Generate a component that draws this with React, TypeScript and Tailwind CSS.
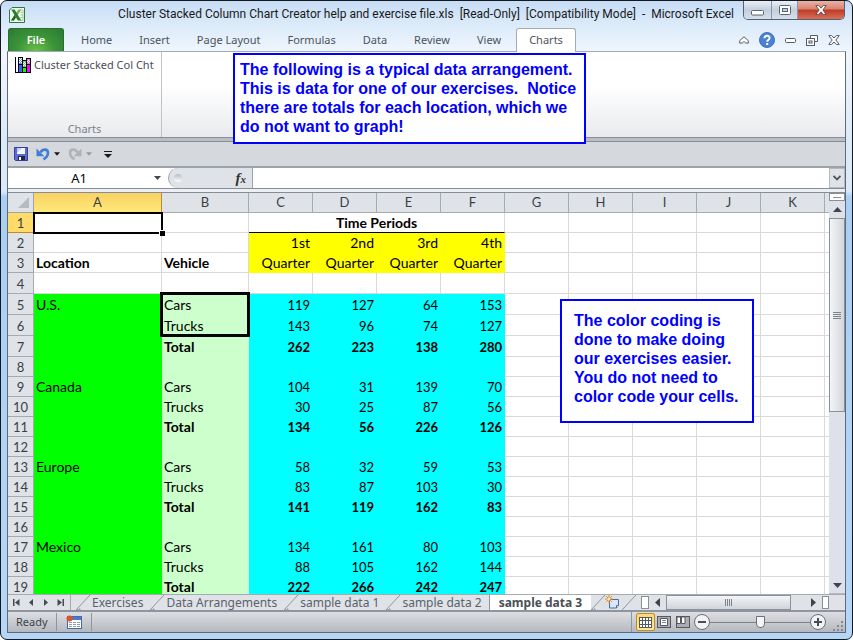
import type { ReactNode } from 'react';
import clsx from 'clsx';

type Cell = string | number;

const rows: { h: string; cells: Cell[]; bold?: boolean; kind: 'title' | 'quarter' | 'plain' | 'data' }[] = [
  { h: 'h-[20px]', kind: 'title', cells: ['', '', 'Time Periods'], bold: true },
  { h: 'h-[20px]', kind: 'quarter', cells: ['', '', '1st', '2nd', '3rd', '4th'] },
  { h: 'h-[20px]', kind: 'quarter', cells: ['Location', 'Vehicle', 'Quarter', 'Quarter', 'Quarter', 'Quarter'] },
  { h: 'h-[21px]', kind: 'plain', cells: ['', '', '', '', '', ''] },
  { h: 'h-[21px]', kind: 'data', cells: ['U.S.', 'Cars', 119, 127, 64, 153] },
  { h: 'h-[21px]', kind: 'data', cells: ['', 'Trucks', 143, 96, 74, 127] },
  { h: 'h-[21px]', kind: 'data', cells: ['', 'Total', 262, 223, 138, 280], bold: true },
  { h: 'h-[20px]', kind: 'data', cells: ['', '', '', '', '', ''] },
  { h: 'h-[20px]', kind: 'data', cells: ['Canada', 'Cars', 104, 31, 139, 70] },
  { h: 'h-[20px]', kind: 'data', cells: ['', 'Trucks', 30, 25, 87, 56] },
  { h: 'h-[20px]', kind: 'data', cells: ['', 'Total', 134, 56, 226, 126], bold: true },
  { h: 'h-[20px]', kind: 'data', cells: ['', '', '', '', '', ''] },
  { h: 'h-[20px]', kind: 'data', cells: ['Europe', 'Cars', 58, 32, 59, 53] },
  { h: 'h-[20px]', kind: 'data', cells: ['', 'Trucks', 83, 87, 103, 30] },
  { h: 'h-[20px]', kind: 'data', cells: ['', 'Total', 141, 119, 162, 83], bold: true },
  { h: 'h-[20px]', kind: 'data', cells: ['', '', '', '', '', ''] },
  { h: 'h-[20px]', kind: 'data', cells: ['Mexico', 'Cars', 134, 161, 80, 103] },
  { h: 'h-[20px]', kind: 'data', cells: ['', 'Trucks', 88, 105, 162, 144] },
  { h: 'h-[20px]', kind: 'data', cells: ['', 'Total', 222, 266, 242, 247], bold: true },
];

const columns = ['A', 'B', 'C', 'D', 'E', 'F', 'G', 'H', 'I', 'J', 'K'];
const emptyColumns = ['G', 'H', 'I', 'J', 'K', 'rest'];
const ribbonTabs = ['Home', 'Insert', 'Page Layout', 'Formulas', 'Data', 'Review', 'View'];
const sheetTabs = ['Exercises', 'Data Arrangements', 'sample data 1', 'sample data 2'];

function cellStyle(kind: string, col: number) {
  if (kind === 'data') {
    if (col === 0) return 'bg-[#00ff00] border-transparent';
    if (col === 1) return 'bg-[#ccffcc] border-transparent';
    return 'bg-[#00ffff] border-transparent';
  }
  if (kind === 'quarter' && col > 1) return 'bg-[#ffff00] border-transparent';
  return 'border-[#d9d9d9]';
}

function Caret({ className }: { className?: string }) {
  return (
    <svg className={className} width="7" height="4" viewBox="0 0 7 4" aria-hidden="true">
      <path d="M0 0h7L3.5 4z" fill="currentColor" />
    </svg>
  );
}

function ExcelLogo() {
  return (
    <svg width="16" height="16" viewBox="0 0 16 16" aria-hidden="true">
      <path d="M3 .5h12.500v15H.5V3z" fill="#f4faf1" stroke="#2d7a3c" />
      <path d="M11.500 3h2.500v10.500h-2.500M11.500 5.500H14M11.500 8H14M11.500 10.500H14" fill="none" stroke="#a5cf9b" />
      <path d="M9.500 2.500h2.800L5 13.500H2z" fill="#6db34a" />
      <path d="M2.200 2.500h3.400l6.700 11H8.800z" fill="#2a7d31" />
      <path d="M2 13.500 5.500 8l1.400 2.600L5 13.500z" fill="#1d6a2b" />
    </svg>
  );
}

function ChartIcon() {
  return (
    <svg width="16" height="17" viewBox="0 0 16 17" className="shrink-0" shapeRendering="crispEdges" aria-hidden="true">
      <path d="M0 0h1v15h15v1H0z" fill="#000" />
      <path d="M3 0h5v16H3zM7 3h5v13H7zM11 1h5v15h-5z" fill="#000" />
      <path d="M4 1h3v6H4z" fill="#6c9cf8" />
      <path d="M4 8h3v7H4z" fill="#3366ff" />
      <path d="M8 4h3v6H8z" fill="#5fd86f" />
      <path d="M8 11h3v4H8z" fill="#00ff00" />
      <path d="M12 2h3v5h-3z" fill="#ff6ae8" />
      <path d="M12 8h3v7h-3z" fill="#ff00ff" />
      <path d="M4 1h1v1H4zM6 1h1v1H6zM5 2h1v1H5zM4 3h1v1H4zM6 3h1v1H6zM5 4h1v1H5zM4 5h1v1H4zM6 5h1v1H6zM9 5h1v1H9zM8 6h1v1H8zM10 6h1v1h-1zM9 7h1v1H9zM8 8h1v1H8zM10 8h1v1h-1zM13 3h1v1h-1zM12 4h1v1h-1zM14 4h1v1h-1zM13 5h1v1h-1z" fill="#fff" />
    </svg>
  );
}

function SaveIcon() {
  return (
    <svg width="14" height="14" viewBox="0 0 14 14" aria-hidden="true">
      <path d="M.5.5h13v13h-12l-1-1z" fill="#5b6bd0" stroke="#3440a0" />
      <path d="M3 1h8v6H3z" fill="#f4f7fd" />
      <path d="M3 1h5l-5 5z" fill="#c3d2f4" />
      <path d="M4 9h7v4H4z" fill="#20264f" />
      <path d="M5 10h2v3H5z" fill="#fff" />
    </svg>
  );
}

function UndoIcon({ flip }: { flip?: boolean }) {
  return (
    <svg width="14" height="14" viewBox="0 0 14 14" className={clsx(flip && '-scale-x-100')} aria-hidden="true">
      <path d="M4.500 5.500C6.500 1.500 12 1.600 12 6c0 2.600-1.800 4.600-4.500 6.400" fill="none" stroke={flip ? '#b0b3b8' : '#3f7fd6'} strokeWidth="2.600" />
      <path d="M.5 1.500v7.800h7.800z" fill={flip ? '#b0b3b8' : '#3f7fd6'} />
    </svg>
  );
}

/* Title bar with the min / max / close group hanging from the top edge */
function TitleBar() {
  return (
    <header className="flex h-[27px] shrink-0 items-start pl-[8px] pr-[7px]">
      <div className="mt-[6px]">
        <ExcelLogo />
      </div>
      <h1 className="mt-[4px] min-w-0 flex-1 overflow-hidden whitespace-pre pr-[9px] text-right font-['Roboto',sans-serif] text-[12px] leading-[18px] text-[#1a1a1a]">
        Cluster Stacked Column Chart Creator help and exercise file.xls  [Read-Only]  [Compatibility Mode]  -  Microsoft Excel
      </h1>
      <div className="flex h-[19px] shrink-0 overflow-hidden rounded-b-[5px] border border-t-0 border-[#56616e]">
        <button aria-label="Minimize" className="flex w-[28px] items-center justify-center border-r border-[#8b97a5] bg-linear-to-b from-[#e9f0f8] via-[#c3cfdc] to-[#d5e0ec]">
          <svg width="13" height="6" viewBox="0 0 13 6" className="mt-[6px]">
            <rect x=".5" y=".5" width="12" height="4.500" rx="1" fill="#fff" stroke="#5b6470" />
          </svg>
        </button>
        <button aria-label="Maximize" className="flex w-[26px] items-center justify-center border-r border-[#8b97a5] bg-linear-to-b from-[#e9f0f8] via-[#c3cfdc] to-[#d5e0ec]">
          <svg width="12" height="10" viewBox="0 0 12 10">
            <rect x=".5" y=".5" width="11" height="9" rx="1" fill="#fff" stroke="#5b6470" />
            <rect x="3.500" y="3.500" width="5" height="3" fill="#c3cfdc" stroke="#5b6470" />
          </svg>
        </button>
        <button aria-label="Close" className="flex w-[46px] items-center justify-center bg-[linear-gradient(#e8b3a6,#d98371_45%,#bf3a24_50%,#d8705a)]">
          <svg width="12" height="10" viewBox="0 0 12 10">
            <path d="M.8.6h3L6 3.200 8.200.6h3L7.800 5l3.400 4.400h-3L6 6.800 3.800 9.400h-3L4.200 5z" fill="#fff" stroke="#5c4648" strokeWidth=".9" />
          </svg>
        </button>
      </div>
    </header>
  );
}

function RibbonTabs() {
  return (
    <nav className="relative z-10 -mb-px flex h-[24px] shrink-0 items-stretch pl-[7px] pr-[12px] text-[11px] text-[#4c535c]">
      <button className="mb-px w-[56px] rounded-t-[3px] border border-b-0 border-[#2d6b2f] bg-[radial-gradient(ellipse_at_bottom,#6cc04a,#3b9438_50%,#2a7a33)] font-semibold text-white">
        File
      </button>
      <div className="flex gap-[27px] pl-[17px] pr-[15px]">
        {ribbonTabs.map((tab) => (
          <button key={tab}>{tab}</button>
        ))}
      </div>
      <button className="w-[60px] rounded-t-[3px] border border-b-0 border-[#a3abb5] bg-white">Charts</button>
      <div className="ml-auto flex items-center gap-[10px] text-[#555c66]">
        <button aria-label="Minimize the Ribbon">
          <svg width="10" height="8" viewBox="0 0 10 8">
            <path d="M.7 4.700 5 .8l4.300 3.900v2.400H6.800L5 5.400 3.200 7.100H.7z" fill="#fff" stroke="currentColor" />
          </svg>
        </button>
        <button aria-label="Help">
          <svg width="16" height="16" viewBox="0 0 16 16">
            <circle cx="8" cy="8" r="7.500" fill="#4a82d2" stroke="#3f6fbc" />
            <path d="M5.500 6.200C5.500 3 10.600 3 10.600 6c0 1.700-2.400 1.900-2.400 3.800" fill="none" stroke="#fff" strokeWidth="1.900" />
            <rect x="7.200" y="11" width="2" height="2" fill="#fff" />
          </svg>
        </button>
        <button aria-label="Minimize Window">
          <svg width="11" height="5" viewBox="0 0 11 5">
            <rect x=".5" y=".5" width="10" height="4" rx="1" fill="#fff" stroke="currentColor" />
          </svg>
        </button>
        <button aria-label="Restore Window">
          <svg width="12" height="11" viewBox="0 0 12 11">
            <path d="M4.500 3.500v-3h7v6h-3" fill="#fff" stroke="currentColor" />
            <rect x=".5" y="3.500" width="8" height="7" fill="#fff" stroke="currentColor" />
            <rect x="3" y="6" width="3" height="2" fill="none" stroke="currentColor" />
          </svg>
        </button>
        <button aria-label="Close Window">
          <svg width="12" height="10" viewBox="0 0 12 10">
            <path d="M.8.6h2.900L6 3 8.300.6h2.900L7.800 5l3.400 4.400H8.300L6 7 3.700 9.400H.8L4.200 5z" fill="#fff" stroke="currentColor" />
          </svg>
        </button>
      </div>
    </nav>
  );
}

function Ribbon() {
  return (
    <section className="flex h-[85px] shrink-0 bg-linear-to-b from-white from-40% to-[#e8eaed] text-[11px]">
      <div className="flex w-[154px] flex-col border-r border-[#bfc3c8]">
        <button className="flex items-center gap-[3px] whitespace-nowrap pl-[7px] pt-[4px] leading-[18px] text-[#4a4f58]">
          <ChartIcon />
          Cluster Stacked Col Cht
        </button>
        <span className="mt-auto text-center leading-[16px] text-[#7b828c]">Charts</span>
      </div>
    </section>
  );
}

function QuickAccess() {
  return (
    <div className="flex h-[26px] shrink-0 items-center border-b-2 border-[#9ba2aa] bg-[#d5d8dd] pl-[6px] text-[#1b1b1b]">
      <button aria-label="Save">
        <SaveIcon />
      </button>
      <button aria-label="Undo" className="ml-[8px] flex items-center gap-[4px]">
        <UndoIcon />
        <Caret className="w-[6px]" />
      </button>
      <button aria-label="Redo" className="ml-[8px] flex items-center gap-[4px] text-[#96999d]">
        <UndoIcon flip />
        <Caret className="w-[6px]" />
      </button>
      <button aria-label="Customize Quick Access Toolbar" className="ml-[12px]">
        <svg width="8" height="7" viewBox="0 0 8 7">
          <path d="M0 0h8v1H0zM0 3h8L4 7z" fill="currentColor" />
        </svg>
      </button>
    </div>
  );
}

function FormulaBar() {
  return (
    <div className="flex h-[20px] shrink-0 bg-white">
      <div className="flex w-[160px] items-center">
        <input aria-label="Name Box" defaultValue="A1" className="w-[142px] bg-transparent text-center text-[13px] leading-[18px] outline-none" />
        <Caret className="ml-[4px] text-[#44494f]" />
      </div>
      <div className="flex w-[84px] items-center justify-between rounded-l-full border-l border-[#9ba2aa] bg-[#dfe3e8] pl-[5px] pr-[6px]">
        <span className="h-[8px] w-[8px] rounded-full bg-linear-to-b from-[#b7bcc2] to-white" />
        <button aria-label="Insert Function" className="font-['Liberation_Serif',serif] text-[15px] font-bold italic leading-[16px] text-[#333]">
          f<span className="text-[11px]">x</span>
        </button>
      </div>
      <input aria-label="Formula Bar" className="min-w-0 flex-1 border-l border-[#9ba2aa] px-1 outline-none" />
      <button aria-label="Expand Formula Bar" className="flex w-[16px] items-center justify-center border border-[#b4b9c0] bg-[#dfe3e8] text-[#50565e]">
        <svg width="8" height="6" viewBox="0 0 8 6">
          <path d="M.5 1 4 4.500 7.500 1" fill="none" stroke="currentColor" strokeWidth="1.800" />
        </svg>
      </button>
    </div>
  );
}

function Note({ className, children }: { className: string; children: ReactNode }) {
  return (
    <div className={clsx("absolute z-20 whitespace-pre border-2 border-[#0000ff] bg-white font-['Liberation_Sans',sans-serif] text-[16px] font-bold leading-[19px] text-[#0000ff]", className)}>
      {children}
    </div>
  );
}

function Sheet() {
  return (
    <div className="relative min-w-0 flex-1 overflow-hidden bg-white">
      <table className="w-full table-fixed border-separate border-spacing-0 font-['Lato',sans-serif] text-black">
        <colgroup>
          <col className="w-[26px]" />
          <col className="w-[128px]" />
          <col className="w-[87px]" />
          {columns.slice(2).map((c) => (
            <col key={c} className="w-[64px]" />
          ))}
          <col />
        </colgroup>
        <thead>
          <tr className="h-[20px] text-[13px] leading-[17px] text-[#3b3f45]">
            <th className="border-b border-r border-[#9ea4ab] bg-[#dfe3e8] p-0">
              <svg width="11" height="11" viewBox="0 0 11 11" className="ml-auto mr-[4px]" aria-hidden="true">
                <path d="M11 0v11H0z" fill="#b6bbc1" />
              </svg>
            </th>
            {columns.map((c) => (
              <th
                key={c}
                scope="col"
                className={clsx(
                  'border-b border-r p-0 font-normal',
                  c === 'A' ? 'border-[#c28a30] bg-linear-to-b from-[#f9d262] to-[#ffe87a]' : 'border-[#a6abb2] bg-[#dfe3e8]'
                )}
              >
                {c}
              </th>
            ))}
            <th className="border-b border-[#a6abb2] bg-[#dfe3e8] p-0" />
          </tr>
        </thead>
        <tbody>
          {rows.map((row, r) => (
            <tr key={r} className={row.h}>
              <th
                scope="row"
                className={clsx(
                  'border-b border-r p-0 text-center align-bottom text-[13px] font-normal leading-[17px] text-[#3b3f45]',
                  r === 0 ? 'border-[#c28a30] bg-[#ffdc69]' : 'border-[#a6abb2] bg-[#dfe3e8]'
                )}
              >
                {r + 1}
              </th>
              {row.cells.map((value, c) => (
                <td
                  key={c}
                  colSpan={row.kind === 'title' && c === 2 ? 4 : 1}
                  className={clsx(
                    'relative whitespace-nowrap border-b border-r px-[2px] py-0 align-bottom',
                    row.kind === 'title' && c === 2 ? 'border-r-[#d9d9d9] border-b-black text-center' : cellStyle(row.kind, c),
                    c > 1 && row.kind !== 'title' && 'text-right',
                    typeof value === 'number' ? 'text-[13px] leading-[17px]' : 'text-[14px] leading-[19px]',
                    (row.bold || (r === 2 && c < 2)) && 'font-bold'
                  )}
                >
                  {value}
                  {r === 0 && c === 0 && (
                    <span className="absolute -left-px -right-[2px] -top-px -bottom-[2px] z-10 border-2 border-black">
                      <span className="absolute -bottom-[4px] -right-[4px] h-[6px] w-[6px] border-l border-t border-white bg-black" />
                    </span>
                  )}
                  {r === 4 && c === 1 && (
                    <span className="absolute -left-[2px] -right-[2px] -top-[2px] z-10 h-[45px] border-[3px] border-black" />
                  )}
                </td>
              ))}
              {emptyColumns.map((c) => (
                <td key={c} className={clsx('border-b border-[#d9d9d9] p-0', c !== 'rest' && 'border-r')} />
              ))}
            </tr>
          ))}
        </tbody>
      </table>
      <Note className="left-[552px] top-[106px] pb-[15px] pl-[12px] pr-[13px] pt-[10px]">
        {'The color coding is\ndone to make doing\nour exercises easier.\nYou do not need to\ncolor code your cells.'}
      </Note>
    </div>
  );
}

function VerticalScroll() {
  return (
    <div className="flex w-[16px] shrink-0 flex-col items-center bg-[#dde1e9] text-[#4a4f56]">
      <div className="flex h-[8px] w-full items-center justify-center border border-[#8b9097] bg-white">
        <span className="h-px w-[8px] bg-[#8b9097]" />
      </div>
      <button aria-label="Scroll up" className="flex h-[17px] w-full items-center justify-center">
        <Triangle d="M0 5h9L4.500 0z" />
      </button>
      <div className="flex h-[194px] w-full flex-col items-center justify-center gap-px border border-[#8b919b] bg-linear-to-r from-[#f3f5f7] to-[#d3d7dd]">
        <span className="h-px w-[8px] bg-[#7d838b]" />
        <span className="h-px w-[8px] bg-[#7d838b]" />
        <span className="h-px w-[8px] bg-[#7d838b]" />
        <span className="h-px w-[8px] bg-[#7d838b]" />
      </div>
      <button aria-label="Scroll down" className="mt-auto flex h-[17px] w-full items-center justify-center border-b border-[#b4b9c0]">
        <Triangle d="M0 0h9L4.500 5z" />
      </button>
    </div>
  );
}

function Triangle({ d, tall }: { d: string; tall?: boolean }) {
  return (
    <svg width={tall ? 5 : 9} height={tall ? 9 : 5} viewBox={tall ? '0 0 5 9' : '0 0 9 5'}>
      <path d={d} fill="#3f444c" />
    </svg>
  );
}

function Slant() {
  return (
    <svg width="14" height="15" viewBox="0 0 14 15" className="shrink-0" aria-hidden="true">
      <path d="M0 15 14 0" fill="none" stroke="#8f959d" />
      <path d="M2.500 12.500 4.500 14.500H1z" fill="#f4f5f7" stroke="#8f959d" strokeWidth=".7" />
    </svg>
  );
}

function NavArrow({ label, d }: { label: string; d: string }) {
  return (
    <button aria-label={label}>
      <svg width="8" height="7" viewBox="0 0 8 7">
        <path d={d} fill="#454b55" />
      </svg>
    </button>
  );
}

function SheetTabs() {
  return (
    <div className="flex h-[16px] shrink-0 border-t border-[#a6abb2] bg-[#dfe3e8] text-[12px] leading-[15px] text-[#5b616b]">
      <div className="flex w-[63px] items-center justify-between border-r border-[#a6abb2] pl-[5px] pr-[6px]">
        <NavArrow label="First sheet" d="M0 0h1.500v7H0zM6.500 0v7L2 3.500z" />
        <NavArrow label="Previous sheet" d="M6 0v7L2 3.500z" />
        <NavArrow label="Next sheet" d="M2 0v7l4-3.500z" />
        <NavArrow label="Last sheet" d="M1.500 0v7L6 3.500zM6.500 0H8v7H6.500z" />
      </div>
      <div className="flex pl-[5px]">
        {sheetTabs.map((tab) => (
          <button key={tab} className="flex whitespace-nowrap pr-[7px]">
            <Slant />
            <span className="pl-[2px]">{tab}</span>
          </button>
        ))}
        <button className="whitespace-nowrap border-l border-[#8f959d] bg-white px-[9px] font-bold text-[#4a4f57]">sample data 3</button>
        <button aria-label="Insert Worksheet" className="flex">
          <Slant />
          <svg width="17" height="15" viewBox="0 0 17 15" aria-hidden="true">
            <path d="M4.500 4.500h9v6l-2 2.500h-7z" fill="#dbe6f8" stroke="#4e6a9e" />
            <path d="M13.500 10.500h-2V13" fill="#fff" stroke="#4e6a9e" />
            <path d="M4 0v8M0 4h8M1.200 1.200l5.600 5.600M6.800 1.200 1.200 6.800" stroke="#e08a1c" />
            <circle cx="4" cy="4" r="1.500" fill="#ffe9a8" />
          </svg>
          <svg width="14" height="15" viewBox="0 0 14 15" aria-hidden="true">
            <path d="M0 15 14 0" fill="none" stroke="#8f959d" />
          </svg>
        </button>
      </div>
      <div className="ml-auto flex w-[188px]">
        <span className="my-px w-[8px] border border-[#8b9097] bg-white" />
        <button aria-label="Scroll left" className="flex w-[17px] items-center justify-center">
          <Triangle tall d="M5 0v9L0 4.500z" />
        </button>
        <div className="flex w-[125px] items-center justify-center gap-px border border-[#8b919b] bg-linear-to-b from-[#f3f5f7] to-[#cfd4da]">
          <span className="h-[7px] w-px bg-[#7d838b]" />
          <span className="h-[7px] w-px bg-[#7d838b]" />
          <span className="h-[7px] w-px bg-[#7d838b]" />
          <span className="h-[7px] w-px bg-[#7d838b]" />
        </div>
        <button aria-label="Scroll right" className="ml-auto flex w-[18px] items-center justify-center">
          <Triangle tall d="M0 0v9l5-4.500z" />
        </button>
        <span className="my-px w-[7px] border border-[#8b9097] bg-white" />
      </div>
      <div className="w-[16px]" />
    </div>
  );
}

function ZoomButton({ label, plus }: { label: string; plus?: boolean }) {
  return (
    <button aria-label={label}>
      <svg width="16" height="16" viewBox="0 0 16 16">
        <circle cx="8" cy="8" r="7.500" fill="#f2f3f5" stroke="#6b7078" />
        <path d={plus ? 'M4 7h3V4h2v3h3v2H9v3H7V9H4z' : 'M4 7h8v2H4z'} fill="#4a4f57" />
      </svg>
    </button>
  );
}

function StatusBar() {
  return (
    <footer className="flex h-[22px] shrink-0 items-center border-t-2 border-[#8f959e] bg-linear-to-b from-[#dcdee2] to-[#b5b9bf] text-[11px] text-[#3e434b]">
      <span className="w-[49px] border-r border-[#8f959e] pl-[8px] leading-[18px]">Ready</span>
      <button aria-label="Record Macro" className="flex h-[18px] w-[35px] items-center justify-center border-r border-[#8f959e]">
        <svg width="16" height="14" viewBox="0 0 16 14">
          <rect x="1.500" y="1.500" width="14" height="12" fill="#fff" stroke="#4a68a6" />
          <path d="M2 2h13v3H2z" fill="#4a7ad0" />
          <path d="M3 7.500h3M7 7.500h3M11 7.500h3M3 9.500h3M7 9.500h3M11 9.500h3M3 11.500h3M7 11.500h3M11 11.500h3" stroke="#8a9cc0" />
          <circle cx="3.500" cy="3.500" r="3" fill="#d9532c" />
        </svg>
      </button>
      <div className="ml-auto flex h-[20px] items-center border-l border-[#8f959e] pl-[4px]">
        <button aria-label="Normal view" className="flex h-[18px] w-[19px] items-center justify-center rounded-[2px] border border-[#c28a30] bg-linear-to-b from-[#fbd873] to-[#ffe98a]">
          <svg width="13" height="11" viewBox="0 0 13 11">
            <rect x=".5" y=".5" width="12" height="10" fill="#fff" stroke="#55595f" />
            <path d="M3.500 0v11M6.500 0v11M9.500 0v11M0 3.500h13M0 7.500h13" stroke="#55595f" />
          </svg>
        </button>
        <button aria-label="Page Layout view" className="ml-[2px]">
          <svg width="14" height="12" viewBox="0 0 14 12">
            <rect x=".5" y=".5" width="13" height="11" fill="#a9adb3" stroke="#55595f" />
            <path d="M3.500 2.500h7v7h-7z" fill="#fff" stroke="#55595f" />
            <path d="M5 4.500h4M5 6.500h4" stroke="#7a7f86" />
          </svg>
        </button>
        <button aria-label="Page Break Preview" className="ml-[5px]">
          <svg width="14" height="12" viewBox="0 0 14 12">
            <rect x=".5" y=".5" width="13" height="11" fill="#a9adb3" stroke="#55595f" />
            <path d="M1 1h3.500v6.500H1zM5.500 1H9v6.500H5.500z" fill="#fff" stroke="#55595f" />
          </svg>
        </button>
        <div className="ml-[4px] flex items-center">
          <ZoomButton label="Zoom out" />
          <input
            type="range"
            aria-label="Zoom"
            defaultValue={50}
            className="h-[14px] w-[100px] appearance-none bg-[linear-gradient(#7d828a,#7d828a)] bg-[length:100%_1px] bg-center bg-no-repeat [&::-webkit-slider-thumb]:h-[12px] [&::-webkit-slider-thumb]:w-[9px] [&::-webkit-slider-thumb]:appearance-none [&::-webkit-slider-thumb]:rounded-b-[4px] [&::-webkit-slider-thumb]:border [&::-webkit-slider-thumb]:border-[#6b7078] [&::-webkit-slider-thumb]:bg-[#f4f5f7]"
          />
          <ZoomButton label="Zoom in" plus />
        </div>
        <svg width="11" height="11" viewBox="0 0 11 11" className="ml-[7px] mr-px self-end" aria-hidden="true">
          <path d="M8 0h2v2H8zM8 4h2v2H8zM4 4h2v2H4zM8 8h2v2H8zM4 8h2v2H4zM0 8h2v2H0z" fill="#868b92" />
        </svg>
      </div>
    </footer>
  );
}

export default function App() {
  return (
    <div className="bg-white">
      <div className="relative flex h-screen min-w-[853px] flex-col overflow-hidden rounded-[7px] border border-[#14181f] bg-[linear-gradient(#c6dcf5,#dcebfa_24px,#f0f6fd_52px,#dbe9f9_140px,#dbe9f9_190px,#a9cff5_196px,#b5d6f7)] font-['Noto_Sans',sans-serif]">
        <TitleBar />
        <RibbonTabs />
        <main className="mx-[6px] mb-[6px] flex min-h-0 flex-1 flex-col border border-[#5f6a78] border-t-[#a3abb5] bg-white">
          <Ribbon />
          <div className="h-[5px] shrink-0 border-y border-[#878d94] bg-[#b9bec4]" />
          <QuickAccess />
          <FormulaBar />
          <div className="h-[5px] shrink-0 border-y border-[#878d94] bg-[#eceff3]" />
          <div className="flex min-h-0 flex-1">
            <Sheet />
            <VerticalScroll />
          </div>
          <SheetTabs />
          <StatusBar />
        </main>
        <Note className="left-[232px] top-[52px] pb-[6px] pl-[5px] pr-[8px] pt-[5px]">
          {'The following is a typical data arrangement.\nThis is data for one of our exercises.  Notice\nthere are totals for each location, which we\ndo not want to graph!'}
        </Note>
      </div>
    </div>
  );
}
